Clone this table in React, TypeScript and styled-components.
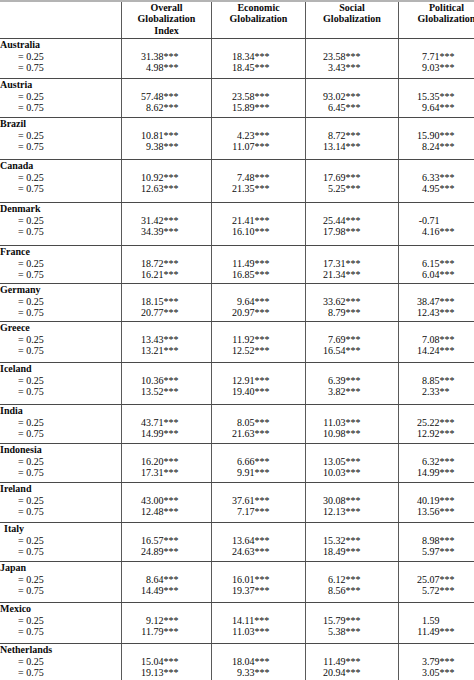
import styled, { createGlobalStyle } from 'styled-components';

const GlobalStyle = createGlobalStyle`
  html, body {
    margin: 0;
    padding: 0;
    background: #ffffff;
  }
  #root {
    width: 474px;
    height: 680px;
    overflow: hidden;
  }
`;

type Country = {
  name: string;
  height: number;
  indent?: number;
  values: [string, string][];
};

const COLUMNS = ['Overall Globalization Index', 'Economic Globalization', 'Social Globalization', 'Political Globalization'];
// x of the decimal point, measured from each column's left rule
const DECIMAL = [29, 30, 27, 28];

const countries: Country[] = [
  { name: 'Australia', height: 40, values: [['31.38***', '4.98***'], ['18.34***', '18.45***'], ['23.58***', '3.43***'], ['7.71***', '9.03***']] },
  { name: 'Austria', height: 39, values: [['57.48***', '8.62***'], ['23.58***', '15.89***'], ['93.02***', '6.45***'], ['15.35***', '9.64***']] },
  { name: 'Brazil', height: 42, values: [['10.81***', '9.38***'], ['4.23***', '11.07***'], ['8.72***', '13.14***'], ['15.90***', '8.24***']] },
  { name: 'Canada', height: 43, values: [['10.92***', '12.63***'], ['7.48***', '21.35***'], ['17.69***', '5.25***'], ['6.33***', '4.95***']] },
  { name: 'Denmark', height: 43, values: [['31.42***', '34.39***'], ['21.41***', '16.10***'], ['25.44***', '17.98***'], ['-0.71', '4.16***']] },
  { name: 'France', height: 38, values: [['18.72***', '16.21***'], ['11.49***', '16.85***'], ['17.31***', '21.34***'], ['6.15***', '6.04***']] },
  { name: 'Germany', height: 38, values: [['18.15***', '20.77***'], ['9.64***', '20.97***'], ['33.62***', '8.79***'], ['38.47***', '12.43***']] },
  { name: 'Greece', height: 41, values: [['13.43***', '13.21***'], ['11.92***', '12.52***'], ['7.69***', '16.54***'], ['7.08***', '14.24***']] },
  { name: 'Iceland', height: 42, values: [['10.36***', '13.52***'], ['12.91***', '19.40***'], ['6.39***', '3.82***'], ['8.85***', '2.33**']] },
  { name: 'India', height: 39, values: [['43.71***', '14.99***'], ['8.05***', '21.63***'], ['11.03***', '10.98***'], ['25.22***', '12.92***']] },
  { name: 'Indonesia', height: 39, values: [['16.20***', '17.31***'], ['6.66***', '9.91***'], ['13.05***', '10.03***'], ['6.32***', '14.99***']] },
  { name: 'Ireland', height: 40, values: [['43.00***', '12.48***'], ['37.61***', '7.17***'], ['30.08***', '12.13***'], ['40.19***', '13.56***']] },
  { name: 'Italy', height: 39, indent: 4, values: [['16.57***', '24.89***'], ['13.64***', '24.63***'], ['15.32***', '18.49***'], ['8.98***', '5.97***']] },
  { name: 'Japan', height: 41, values: [['8.64***', '14.49***'], ['16.01***', '19.37***'], ['6.12***', '8.56***'], ['25.07***', '5.72***']] },
  { name: 'Mexico', height: 41, values: [['9.12***', '11.79***'], ['14.11***', '11.03***'], ['15.79***', '5.38***'], ['1.59', '11.49***']] },
  { name: 'Netherlands', height: 45, values: [['15.04***', '19.13***'], ['18.04***', '9.33***'], ['11.49***', '20.94***'], ['3.79***', '3.05***']] },
];

const Num = ({ value }: { value: string }) => {
  const [int, rest] = value.split('.');
  return (
    <NumLine>
      <IntPart>{int}</IntPart>.{rest}
    </NumLine>
  );
};

const App = () => {
  return (
    <>
      <GlobalStyle />
      <Table>
        <HeaderRow>
          <LabelCell />
          {COLUMNS.map((title) => (
            <HeadCell key={title}>{title}</HeadCell>
          ))}
        </HeaderRow>
        {countries.map((c) => (
          <Block key={c.name} $h={c.height}>
            <LabelCell>
              <CountryName $indent={c.indent ?? 0}>{c.name}</CountryName>
              <Quantile>= 0.25</Quantile>
              <Quantile>= 0.75</Quantile>
            </LabelCell>
            {c.values.map((pair, i) => (
              <ValueCell key={i} $dec={DECIMAL[i]}>
                <Spacer />
                <Num value={pair[0]} />
                <Num value={pair[1]} />
              </ValueCell>
            ))}
          </Block>
        ))}
      </Table>
    </>
  );
};

export default App;

const Table = styled.div`
  width: 494px;
  font-family: 'Liberation Serif', 'Times New Roman', serif;
  font-size: 10px;
  color: #0a0a0a;
`;

const HeaderRow = styled.div`
  display: grid;
  grid-template-columns: 121px 90px 94px 93px 96px;
  height: 38px;
  box-sizing: border-box;
  border-top: 2px solid #b4b4b4;
`;

const Block = styled.div<{ $h: number }>`
  display: grid;
  grid-template-columns: 121px 90px 94px 93px 96px;
  height: ${(p) => p.$h}px;
  box-sizing: border-box;
  border-top: 1px solid #4a4a4a;
`;

const LabelCell = styled.div`
  line-height: 11.5px;
`;

const HeadCell = styled.div`
  border-left: 1px solid #5a5a5a;
  font-weight: bold;
  text-align: center;
  line-height: 11.3px;
  padding: 0 4px;
`;

const CountryName = styled.div<{ $indent: number }>`
  font-weight: bold;
  padding-left: ${(p) => p.$indent}px;
`;

const Quantile = styled.div`
  padding-left: 18px;
`;

const ValueCell = styled.div<{ $dec: number }>`
  border-left: 1px solid #5a5a5a;
  line-height: 11.5px;
  padding-left: ${(p) => p.$dec - 11}px;
`;

const Spacer = styled.div`
  height: 11.5px;
`;

const NumLine = styled.div`
  white-space: nowrap;
`;

const IntPart = styled.span`
  display: inline-block;
  width: 11px;
  text-align: right;
`;
